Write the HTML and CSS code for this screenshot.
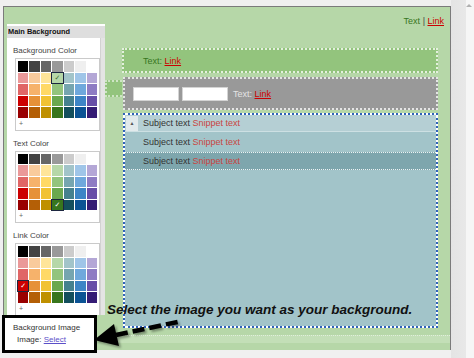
FILE: index.html
```html
<!DOCTYPE html>
<html lang="en">
  <head>
    <meta charset="UTF-8" />
    <meta name="viewport" content="width=device-width, initial-scale=1.0" />
    <title>Template Designer</title>
    <link rel="stylesheet" href="styles.css">
  </head>
  <body>
    <div class="frame">
      <aside class="side">
        <div class="panel">
          <h4 class="panel-title">Main Background</h4>
          <div class="panel-main">
            <div class="panel-body">
              <div class="picker-label">Background Color</div>
              <div class="palette" data-selected="10" data-light="1">
                <div class="swatches"></div>
                <div class="palette-more">+</div>
              </div>

              <div class="picker-label">Text Color</div>
              <div class="palette" data-selected="31">
                <div class="swatches"></div>
                <div class="palette-more">+</div>
              </div>

              <div class="picker-label">Link Color</div>
              <div class="palette" data-selected="21">
                <div class="swatches"></div>
                <div class="palette-more">+</div>
              </div>
            </div>
            <div class="panel-scroll"></div>
          </div>
        </div>

        <div class="bg-image">
          <div>Background Image</div>
          <div class="bg-image-row">Image: <a href="#" class="select-link">Select</a></div>
        </div>
      </aside>

      <main class="preview">
        <div class="preview-top">
          <span class="text-green">Text</span> <span class="sep">|</span> <a href="#" class="link">Link</a>
        </div>

        <div class="row">
          <div class="gutter"></div>
          <div class="band band-green">
            <span class="text-green">Text:</span>&nbsp;<a href="#" class="link">Link</a>
          </div>
        </div>

        <div class="row row-gray">
          <div class="gutter"><div class="handle"></div></div>
          <div class="band band-gray">
            <input type="text" class="field" />
            <input type="text" class="field" />
            <span class="band-text">Text: <a href="#" class="link">Link</a></span>
          </div>
        </div>

        <div class="row row-posts">
          <div class="gutter"></div>
          <div class="posts-wrap">
            <div class="posts">
              <div class="post post-first">
                <span class="toggle">&#9650;</span>
                <span>Subject text <span class="snippet">Snippet text</span></span>
              </div>
              <div class="post">
                <span>Subject text <span class="snippet">Snippet text</span></span>
              </div>
              <div class="post post-active">
                <span>Subject text <span class="snippet">Snippet text</span></span>
              </div>
            </div>
          </div>
        </div>

        <div class="footer-strip"></div>
      </main>
    </div>

    <div class="scrollbar"><span class="scroll-up"></span></div>

    <div class="callout">Select the image you want as your background.</div>
    <svg class="arrow" width="100" height="45" viewBox="0 0 100 45">
      <line x1="31" y1="25" x2="97" y2="11" stroke="#000" stroke-width="4.5" stroke-dasharray="12 5" />
      <polygon points="9,30 29,14 34,36" fill="#000" />
    </svg>

    <script>
      const palette = [
        '#000000', '#434343', '#666666', '#999999', '#cccccc', '#efefef', '#ffffff',
        '#ea9999', '#f9cb9c', '#ffe599', '#b6d7a8', '#a2c4c9', '#9fc5e8', '#b4a7d6',
        '#e06666', '#f6b26b', '#ffd966', '#93c47d', '#76a5af', '#6fa8dc', '#8e7cc3',
        '#cc0000', '#e69138', '#f1c232', '#6aa84f', '#45818e', '#3d85c6', '#674ea7',
        '#990000', '#b45f06', '#bf9000', '#38761d', '#134f5c', '#0b5394', '#351c75',
      ];

      function buildPalettes() {
        const boxes = document.querySelectorAll('.palette');

        for (let box of boxes) {
          const selected = Number(box.dataset.selected);
          const grid = box.querySelector('.swatches');

          palette.forEach((color, i) => {
            const swatch = document.createElement('span');
            swatch.className = 'swatch';
            swatch.style.backgroundColor = color;

            if (i === selected) {
              swatch.classList.add('is-selected');
              if (box.dataset.light) swatch.classList.add('is-light');
              swatch.textContent = '\u2713';
            }

            grid.appendChild(swatch);
          });
        }
      }

      buildPalettes();
    </script>
  </body>
</html>
```

FILE: styles.css
```css
html {
  height: 100%;
}

body {
  margin: 0;
  width: 474px;
  height: 358px;
  display: flex;
  position: relative;
  overflow: hidden;
  background-color: #f0f0f0;
  font-family: "Liberation Sans", Arial, Helvetica, sans-serif;
}

a {
  text-decoration: underline;
}

.frame {
  margin: 6px 0 0 3px;
  width: 446px;
  height: 343px;
  flex-shrink: 0;
  display: flex;
  border: 1px solid #7b7b7b;
  border-bottom: none;
  background-color: #b6d7a8;
}

.scrollbar {
  flex: 1;
  background: linear-gradient(to right, #e4e4e4 0, #e8e8e8 15px, #f6f6f6 15px);
}

.scroll-up {
  display: block;
  width: 0;
  height: 0;
  margin: 4px 0 0 15px;
  border-left: 3px solid transparent;
  border-right: 3px solid transparent;
  border-bottom: 3px solid #b0b0b0;
}

/* left editor panel */

.side {
  width: 98px;
  margin: 17px 0 0 3px;
  flex-shrink: 0;
  display: flex;
  flex-direction: column;
}

.panel {
  height: 291px;
  flex-shrink: 0;
  display: flex;
  flex-direction: column;
  overflow: hidden;
  padding-top: 2px;
  box-sizing: border-box;
  background-color: #ffffff;
}

.panel-main {
  flex: 1;
  display: flex;
}

.panel-body {
  flex: 1;
}

.panel-scroll {
  width: 5px;
  background-color: #e4e4e4;
  border-left: 1px solid #d2d2d2;
}

.panel-title {
  margin: 0;
  height: 12px;
  line-height: 12px;
  padding-left: 1px;
  font-size: 7.4px;
  font-weight: bold;
  color: #111;
  background-color: #dedede;
}

.picker-label {
  margin-top: 6px;
  padding-left: 6px;
  line-height: 14px;
  font-size: 8px;
  color: #444;
}

.palette {
  box-sizing: border-box;
  width: 85px;
  margin-left: 8px;
  padding: 2px 2px 0 2px;
  border: 1px solid #cacaca;
  background-color: #ffffff;
}

.swatches {
  display: grid;
  grid-template-columns: repeat(7, 1fr);
  grid-auto-rows: 10.5px;
  gap: 1px;
}

.swatch {
  font-size: 7px;
  line-height: 10.5px;
  text-align: center;
  color: #ffffff;
  font-family: "DejaVu Sans", sans-serif;
}

.swatch.is-selected {
  box-shadow: 0 0 0 1px #1d2740;
}

.swatch.is-light {
  color: #3d6b2e;
}

.palette-more {
  height: 12px;
  line-height: 12px;
  padding-left: 1px;
  font-size: 7px;
  color: #666;
}

.bg-image {
  box-sizing: border-box;
  width: 95px;
  height: 38px;
  margin-left: -5px;
  flex-shrink: 0;
  padding: 4px 0 0 8px;
  border: 3px solid #000;
  background-color: #ffffff;
  font-size: 8px;
  line-height: 12px;
  color: #333;
}

.bg-image-row {
  padding-left: 4px;
}

.select-link {
  color: #5b4fc9;
}

/* preview area */

.preview {
  flex: 1;
  display: flex;
  flex-direction: column;
}

.preview-top {
  height: 41px;
  box-sizing: border-box;
  padding: 9px 6px 0 0;
  text-align: right;
  font-size: 9px;
  line-height: 11px;
}

.text-green {
  color: #38761d;
}

.sep {
  color: #444;
}

.link {
  color: #cc0000;
}

.row {
  display: flex;
  padding-right: 12px;
}

.gutter {
  width: 17px;
  flex-shrink: 0;
}

.band {
  flex: 1;
  box-sizing: border-box;
  display: flex;
  align-items: center;
  font-size: 9px;
}

.band-green {
  height: 25px;
  padding-left: 19px;
  border: 2px dotted rgba(255, 255, 255, 0.75);
  background-color: #93c47d;
}

.row-gray {
  margin-top: 4px;
}

.handle {
  box-sizing: border-box;
  height: 17px;
  margin-top: 3px;
  border: 2px dotted rgba(255, 255, 255, 0.55);
  border-right: none;
  background-color: #93c47d;
}

.band-gray {
  height: 33px;
  margin-left: 1px;
  padding-left: 8px;
  gap: 3px;
  border: 2px dotted rgba(255, 255, 255, 0.75);
  background-color: #999999;
}

.field {
  box-sizing: border-box;
  width: 46px;
  height: 14px;
  margin: 1px 0 0 0;
  padding: 0;
  border: 1px solid #d4d4d4;
  background-color: #ffffff;
}

.band-text {
  margin-left: 2px;
  color: #e4e4e4;
}

.row-posts {
  margin-top: 3px;
  height: 215px;
}

.posts-wrap {
  flex: 1;
  margin-left: 1px;
  background-color: #ffffff;
}

.posts {
  box-sizing: border-box;
  height: 100%;
  border: 2px dotted #2f62b8;
  background-color: #a2c4c9;
  background-clip: padding-box;
}

.post {
  display: flex;
  align-items: center;
  height: 20px;
  padding-left: 18px;
  font-size: 9px;
  color: #333;
}

.post-first {
  height: 16px;
  padding-left: 1px;
  gap: 5px;
  background-color: #b5cfd4;
  border-bottom: 1px solid #cde0e3;
}

.toggle {
  width: 12px;
  height: 15px;
  line-height: 15px;
  text-align: center;
  font-size: 5px;
  color: #555;
  background-color: #e2eaec;
}

.post-active {
  height: 16px;
  border-top: 1px dotted rgba(255, 255, 255, 0.85);
  border-bottom: 1px dotted rgba(255, 255, 255, 0.85);
  background-color: #7ea6ad;
}

.snippet {
  color: #c9443f;
}

.footer-strip {
  height: 7px;
  margin-top: 7px;
  border-top: 1px dotted rgba(255, 255, 255, 0.5);
  background-color: #c3dfb7;
}

/* annotation overlay */

.callout {
  position: absolute;
  left: 107px;
  top: 302px;
  font-size: 13.5px;
  line-height: 16px;
  font-weight: bold;
  font-style: italic;
  color: #111;
  white-space: nowrap;
}

.arrow {
  position: absolute;
  left: 85px;
  top: 310px;
  filter: drop-shadow(2px 2px 1px rgba(0, 0, 0, 0.35));
}
```
